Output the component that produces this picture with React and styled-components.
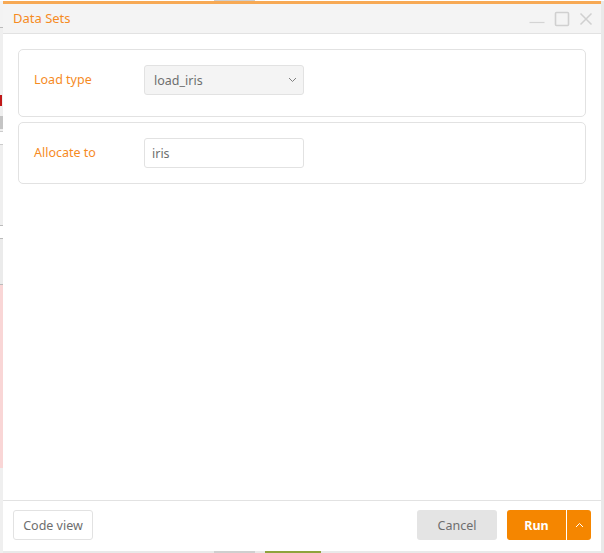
import React from 'react';
import styled, { createGlobalStyle } from 'styled-components';

const GlobalStyle = createGlobalStyle`
	html, body {
		margin: 0;
		padding: 0;
		background: #fff;
	}
	* {
		box-sizing: border-box;
	}
`;

export default function App() {
	return (
		<React.Fragment>
			<GlobalStyle />
			<Page>
				<LeftStrip>
					<StripPart $height={27} $color="#f3f3f3" />
					<StripPart $height={1} $color="#bbbbbb" />
					<StripPart $height={67} $color="#efefef" />
					<StripPart $height={11} $color="#c01818" $width={2} />
					<StripPart $height={10} $color="#efefef" />
					<StripPart $height={13} $color="#c4c4c4" />
					<StripPart $height={2} $color="#efefef" />
					<StripPart $height={1} $color="#cccccc" />
					<StripPart $height={12} $color="#ffffff" />
					<StripPart $height={1} $color="#cccccc" />
					<StripPart $height={80} $color="#efefef" />
					<StripPart $height={1} $color="#bbbbbb" />
					<StripPart $height={12} $color="#ffffff" />
					<StripPart $height={1} $color="#bbbbbb" />
					<StripPart $height={45} $color="#ebebeb" />
					<StripPart $height={1} $color="#bbbbbb" />
					<StripPart $height={183} $color="#f9d6d6" />
					<StripPart $height={85} $color="#efefef" />
				</LeftStrip>
				<TopPeek>
					<PeekBlock $width={41} $left={214} $color="#cfcfcf" />
				</TopPeek>
				<BottomPeek>
					<PeekBlock $width={41} $left={214} $color="#cfcfcf" />
					<PeekBlock $width={56} $left={10} $color="#8fa33c" />
				</BottomPeek>
				<Dialog>
					<Header>
						<Title>Data Sets</Title>
						<WindowIcons>
							<svg width="16" height="16" viewBox="0 0 16 16">
								<path d="M0.5 11.5H15.5" stroke="#d4d4d4" strokeWidth="1.2" fill="none" />
							</svg>
							<svg width="16" height="16" viewBox="0 0 16 16">
								<rect x="1.5" y="1.5" width="13" height="13" rx="1" stroke="#d0d0d0" strokeWidth="1.6" fill="none" />
							</svg>
							<svg width="14" height="14" viewBox="0 0 14 14">
								<path d="M1.5 1.5L12.5 12.5M12.5 1.5L1.5 12.5" stroke="#d0d0d0" strokeWidth="1.5" fill="none" />
							</svg>
						</WindowIcons>
					</Header>
					<Body>
						<Card $height={68}>
							<Label>Load type</Label>
							<SelectBox>
								<span>load_iris</span>
								<svg width="9" height="6" viewBox="0 0 9 6">
									<path d="M1 1L4.5 4.5L8 1" stroke="#808080" strokeWidth="1" fill="none" />
								</svg>
							</SelectBox>
						</Card>
						<Card $height={62}>
							<Label>Allocate to</Label>
							<TextInput defaultValue="iris" readOnly />
						</Card>
					</Body>
					<Footer>
						<CodeButton>Code view</CodeButton>
						<FooterRight>
							<CancelButton>Cancel</CancelButton>
							<RunGroup>
								<RunButton>Run</RunButton>
								<RunArrow>
									<svg width="9" height="6" viewBox="0 0 9 6">
										<path d="M1 5L4.5 1.5L8 5" stroke="#fff" strokeWidth="1" fill="none" />
									</svg>
								</RunArrow>
							</RunGroup>
						</FooterRight>
					</Footer>
				</Dialog>
			</Page>
		</React.Fragment>
	);
}

const Page = styled.div`
	position: relative;
	width: 604px;
	height: 553px;
	overflow: hidden;
	background: #e9e9e9;
	font-family: 'Noto Sans', 'Open Sans', sans-serif;
`;

const LeftStrip = styled.div`
	width: 3px;
	height: 553px;
	display: flex;
	flex-direction: column;
	background: #efefef;
`;

const StripPart = styled.div`
	width: ${props => (props.$width ? `${props.$width}px` : '100%')};
	height: ${props => props.$height}px;
	background: ${props => props.$color};
`;

const TopPeek = styled.div`
	position: absolute;
	top: 0;
	left: 0;
	width: 100%;
	height: 1px;
	display: flex;
	background: #fff;
`;

const BottomPeek = styled.div`
	position: absolute;
	bottom: 0;
	left: 0;
	width: 100%;
	height: 2px;
	display: flex;
`;

const PeekBlock = styled.div`
	width: ${props => props.$width}px;
	margin-left: ${props => props.$left}px;
	background: ${props => props.$color};
`;

const Dialog = styled.div`
	position: absolute;
	top: 1px;
	left: 3px;
	width: 598px;
	height: 550px;
	display: flex;
	flex-direction: column;
	background: #fff;
	border-top: 3px solid #f7a954;
`;

const Header = styled.div`
	height: 30px;
	flex-shrink: 0;
	display: flex;
	align-items: center;
	justify-content: space-between;
	padding: 0 8px 0 10px;
	background: #f4f4f4;
	border-bottom: 1px solid #e2e2e2;
`;

const Title = styled.div`
	font-size: 13px;
	line-height: 16px;
	margin-top: -2px;
	color: #f68b1f;
`;

const WindowIcons = styled.div`
	display: flex;
	align-items: center;
	gap: 9px;
`;

const Body = styled.div`
	flex: 1;
	display: flex;
	flex-direction: column;
	gap: 5px;
	padding: 15px 15px 0;
`;

const Card = styled.div`
	height: ${props => props.$height}px;
	display: flex;
	align-items: flex-start;
	padding: 15px 15px 0;
	border: 1px solid #e2e2e2;
	border-radius: 5px;
`;

const Label = styled.div`
	width: 110px;
	height: 30px;
	line-height: 30px;
	font-size: 12.5px;
	color: #f68b1f;
`;

const SelectBox = styled.div`
	width: 160px;
	height: 30px;
	display: flex;
	align-items: center;
	justify-content: space-between;
	padding: 0 6px 0 9px;
	font-size: 12.5px;
	color: #6e6e6e;
	background: #f4f4f4;
	border: 1px solid #e2e2e2;
	border-radius: 3px;
`;

const TextInput = styled.input`
	width: 160px;
	height: 30px;
	padding: 0 7px;
	font-family: inherit;
	font-size: 12.5px;
	color: #6e6e6e;
	background: #fff;
	border: 1px solid #e2e2e2;
	border-radius: 3px;
	outline: none;
`;

const Footer = styled.div`
	height: 51px;
	flex-shrink: 0;
	display: flex;
	align-items: flex-start;
	justify-content: space-between;
	padding: 9px 10px 0;
	border-top: 1px solid #e2e2e2;
`;

const FooterRight = styled.div`
	display: flex;
	gap: 10px;
`;

const BaseButton = styled.button`
	height: 30px;
	padding: 0;
	font-family: inherit;
	font-size: 12.5px;
	border-radius: 3px;
	cursor: pointer;
`;

const CodeButton = styled(BaseButton)`
	width: 80px;
	color: #6e6e6e;
	background: #fff;
	border: 1px solid #e2e2e2;
`;

const CancelButton = styled(BaseButton)`
	width: 80px;
	color: #6e6e6e;
	background: #e4e4e4;
	border: none;
`;

const RunGroup = styled.div`
	display: flex;
	gap: 1px;
`;

const RunButton = styled(BaseButton)`
	width: 59px;
	color: #fff;
	font-weight: 700;
	background: #f58600;
	border: none;
	border-radius: 3px 0 0 3px;
`;

const RunArrow = styled(BaseButton)`
	width: 24px;
	display: flex;
	align-items: center;
	justify-content: center;
	background: #f58600;
	border: none;
	border-radius: 0 3px 3px 0;
`;
